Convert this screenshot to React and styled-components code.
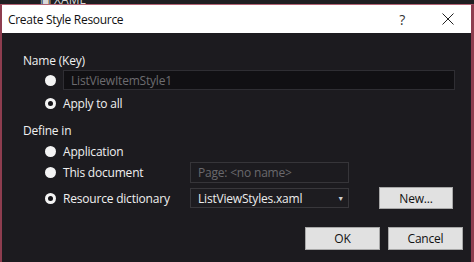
import React from 'react'
import styled, { createGlobalStyle } from 'styled-components'

const GlobalStyle = createGlobalStyle`
    html, body {
        margin: 0;
        padding: 0;
        background: #1b1a1e;
    }
    body {
        width: 474px;
        height: 262px;
        overflow: hidden;
        font-family: "Open Sans", "Noto Sans", sans-serif;
    }
`

// strip of the editor that shows above the dialog
const Backdrop = styled.div`
    height: 4px;
    overflow: hidden;
    background: #1f1f22;
    position: relative;

    span {
        position: absolute;
        left: 40px;
        top: -9px;
        color: #d8d8d8;
        font-size: 12px;
        white-space: nowrap;
    }
`

const Window = styled.div`
    width: 474px;
    height: 258px;
    box-sizing: border-box;
    border-left: 2px solid #8e3d4f;
    border-right: 3px solid #8e3d4f;
    border-top: 1px solid #b06273;
    background: #1c1b1f;
    display: flex;
    flex-direction: column;
`

const TitleBar = styled.div`
    height: 28px;
    background: #ffffff;
    display: flex;
    align-items: center;
    padding-left: 6px;
    color: #111;
    font-size: 12px;
    letter-spacing: -0.3px;

    .title {
        flex: 1;
    }
`

const TitleButton = styled.div`
    width: ${p => p.w}px;
    display: flex;
    justify-content: center;
    align-items: center;
    font-size: 14px;
    color: #333;
`

const Body = styled.div`
    flex: 1;
    padding: 20px 15px 0 21px;
    color: #f0f0f0;
    font-size: 12px;
    letter-spacing: -0.2px;
`

const Label = styled.div`
    height: ${p => p.h || 17}px;
    line-height: 16px;
    margin-top: ${p => p.mt || 0}px;
`

const Row = styled.div`
    display: flex;
    align-items: center;
    height: ${p => p.h}px;
    margin-top: ${p => p.mt || 0}px;
    padding-left: 22px;
`

const Radio = styled.span`
    width: 11px;
    height: 11px;
    border-radius: 50%;
    background: #f4f4f4;
    flex: none;
    box-sizing: border-box;
    position: relative;
    margin-right: 7px;

    &::after {
        content: '';
        display: ${p => (p.checked ? 'block' : 'none')};
        position: absolute;
        left: 3px;
        top: 3px;
        width: 5px;
        height: 5px;
        border-radius: 50%;
        background: #141317;
    }
`

const Choice = styled.div`
    width: ${p => p.w || 'auto'};
    display: flex;
    align-items: center;
    flex: none;
`

const TextBox = styled.div`
    box-sizing: border-box;
    width: ${p => p.w}px;
    height: ${p => p.h}px;
    background: ${p => p.bg};
    border: 1px solid ${p => p.bd};
    color: ${p => p.fg};
    display: flex;
    align-items: center;
    padding: 0 4px 0 7px;
    flex: none;
`

const Caret = styled.span`
    margin-left: auto;
    font-size: 7px;
    color: #cfcfcf;
`

const Button = styled.button`
    box-sizing: border-box;
    width: ${p => p.w || 75}px;
    height: ${p => p.h || 23}px;
    margin-left: ${p => p.ml || 0}px;
    background: #e1e1e1;
    border: 1px solid #a8a8a8;
    color: #111;
    font-family: inherit;
    font-size: 12px;
    letter-spacing: -0.2px;
    padding: 0;
    flex: none;
`

const Footer = styled.div`
    display: flex;
    justify-content: flex-end;
    margin-top: 18px;
    margin-right: -7px;
`

export default function App() {
    return (
        <>
            <GlobalStyle />
            <Backdrop><span>▣ XAML</span></Backdrop>
            <Window>
                <TitleBar>
                    <span className="title">Create Style Resource</span>
                    <TitleButton w={18}>?</TitleButton>
                    <TitleButton w={30} />
                    <TitleButton w={14}>
                        <svg width="12" height="12" viewBox="0 0 12 12">
                            <path d="M0.5 0.5 L11.5 11.5 M11.5 0.5 L0.5 11.5" stroke="#222" strokeWidth="1" />
                        </svg>
                    </TitleButton>
                    <TitleButton w={16} />
                </TitleBar>

                <Body>
                    <Label>Name (Key)</Label>
                    <Row h={20}>
                        <Radio />
                        <TextBox w={392} h={20} bg="#111013" bd="#2f2e33" fg="#6d6c70">ListViewItemStyle1</TextBox>
                    </Row>
                    <Row h={20} mt={3}>
                        <Choice><Radio checked />Apply to all</Choice>
                    </Row>

                    <Label mt={10} h={18}>Define in</Label>
                    <Row h={20}>
                        <Choice><Radio />Application</Choice>
                    </Row>
                    <Row h={21} mt={1}>
                        <Choice w="145px"><Radio />This document</Choice>
                        <TextBox w={159} h={21} bg="#1c1b1f" bd="#363539" fg="#6a696d">Page: &lt;no name&gt;</TextBox>
                    </Row>
                    <Row h={22} mt={4}>
                        <Choice w="145px"><Radio checked />Resource dictionary</Choice>
                        <TextBox w={159} h={20} bg="#1d1c20" bd="#38373b" fg="#ececec">
                            ListViewStyles.xaml
                            <Caret>▼</Caret>
                        </TextBox>
                        <Button w={74} h={22} ml={30}>New...</Button>
                    </Row>

                    <Footer>
                        <Button>OK</Button>
                        <Button ml={8}>Cancel</Button>
                    </Footer>
                </Body>
            </Window>
        </>
    )
}
